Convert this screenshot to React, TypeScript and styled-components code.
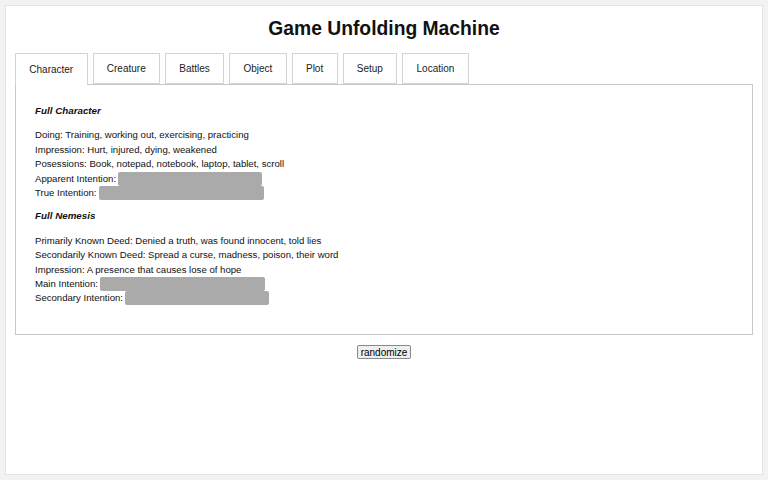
import React from "react";
import styled, { createGlobalStyle } from "styled-components";

const Global = createGlobalStyle`
  html, body { margin: 0; padding: 0; background: #f2f2f2; }
  body { font-family: "Liberation Sans", Arial, sans-serif; color: #111; }
  #root { padding: 5px; }
`;

const Page = styled.div`
  box-sizing: border-box;
  width: 758px;
  height: 470px;
  background: #fff;
  border: 1px solid #e2e2e2;
  padding: 0 9px 0 9px;
  display: flex;
  flex-direction: column;
`;

const Title = styled.h1`
  margin: 12px 0 0;
  height: 35px;
  text-align: center;
  font-size: 19.3px;
  font-weight: bold;
  line-height: 22px;
`;

const TabBar = styled.div`
  display: flex;
  gap: 5px;
  height: 31px;
  position: relative;
  z-index: 1;
`;

const Tab = styled.div<{ $active?: boolean }>`
  box-sizing: border-box;
  height: ${(p) => (p.$active ? "32px" : "31px")};
  padding: 0 13.3px 1px;
  display: flex;
  align-items: center;
  font-size: 10px;
  color: #222;
  background: #fff;
  border: 1px solid #d4d4d4;
  border-bottom: ${(p) => (p.$active ? "none" : "1px solid #d4d4d4")};
`;

const Panel = styled.div`
  box-sizing: border-box;
  width: 738px;
  height: 251px;
  border: 1px solid #c8c8c8;
  padding: 19px 19px;
  font-size: 9.6px;
  line-height: 14.4px;
`;

const Heading = styled.div`
  font-weight: bold;
  font-style: italic;
  font-size: 9.8px;
  margin: 0 0 10px;
`;

const Section = styled.div`
  margin-bottom: 9px;
`;

const Line = styled.div`
  white-space: nowrap;
`;

const Redacted = styled.span`
  display: inline-block;
  vertical-align: top;
  height: 14px;
  border-radius: 2px;
  background: #aaaaaa;
  margin-left: 2px;
`;

const Footer = styled.div`
  display: flex;
  justify-content: center;
  padding-top: 10px;
`;

const Button = styled.button`
  font-family: "Liberation Sans", Arial, sans-serif;
  font-size: 10px;
  line-height: 11px;
  padding: 0 3px;
  height: 14px;
  background: #efefef;
  color: #000;
  border: 1px solid #8a8a8a;
  border-radius: 2px;
`;

const tabs = ["Character", "Creature", "Battles", "Object", "Plot", "Setup", "Location"];

export default function App() {
  return (
    <>
      <Global />
      <Page>
        <Title>Game Unfolding Machine</Title>
        <TabBar>
          {tabs.map((t, i) => (
            <Tab key={t} $active={i === 0}>
              {t}
            </Tab>
          ))}
        </TabBar>
        <Panel>
          <Section>
            <Heading>Full Character</Heading>
            <Line>Doing: Training, working out, exercising, practicing</Line>
            <Line>Impression: Hurt, injured, dying, weakened</Line>
            <Line>Posessions: Book, notepad, notebook, laptop, tablet, scroll</Line>
            <Line>
              Apparent Intention:<Redacted style={{ width: 144 }} />
            </Line>
            <Line>
              True Intention:<Redacted style={{ width: 165 }} />
            </Line>
          </Section>
          <Section>
            <Heading>Full Nemesis</Heading>
            <Line>Primarily Known Deed: Denied a truth, was found innocent, told lies</Line>
            <Line>Secondarily Known Deed: Spread a curse, madness, poison, their word</Line>
            <Line>Impression: A presence that causes lose of hope</Line>
            <Line>
              Main Intention:<Redacted style={{ width: 165 }} />
            </Line>
            <Line>
              Secondary Intention:<Redacted style={{ width: 144 }} />
            </Line>
          </Section>
        </Panel>
        <Footer>
          <Button>randomize</Button>
        </Footer>
      </Page>
    </>
  );
}
